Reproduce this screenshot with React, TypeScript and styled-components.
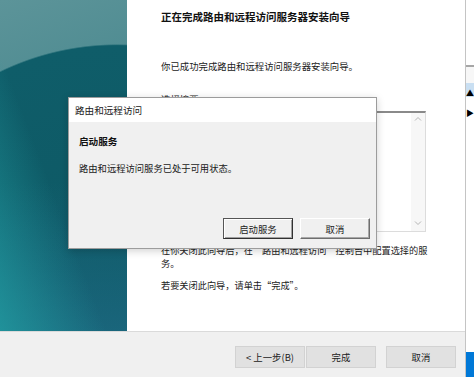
import React from "react";
import styled, { createGlobalStyle } from "styled-components";

const GlobalStyle = createGlobalStyle`
  html, body {
    margin: 0;
    padding: 0;
    background: #ffffff;
  }
  body {
    font-family: "Noto Sans CJK SC", "Noto Sans", sans-serif;
    color: #1a1a1a;
  }
`;

const Desktop = styled.div`
  position: relative;
  width: 474px;
  height: 377px;
  display: flex;
  overflow: hidden;
`;

const Wizard = styled.div`
  width: 466px;
  display: flex;
  flex-direction: column;
  border-right: 1px solid #c4c4c4;
  box-sizing: border-box;
`;

const Main = styled.div`
  height: 331px;
  display: flex;
`;

const Banner = styled.div`
  width: 127px;
  flex-shrink: 0;
  background:
    linear-gradient(to top right, rgba(34, 160, 164, 0.75) 0%, rgba(34, 160, 164, 0) 42%),
    linear-gradient(to bottom, rgba(36, 112, 142, 0) 55%, rgba(36, 112, 142, 0.55) 100%),
    radial-gradient(circle 268px at 117px 312px, #0d5864 0%, #0f5d69 99.4%, rgba(15, 93, 105, 0) 100%),
    linear-gradient(160deg, #5c9499 0%, #43848b 55%, #307780 100%);
`;

const Content = styled.div`
  flex: 1;
  background: #ffffff;
  padding: 10px 0 0 34px;
  display: flex;
  flex-direction: column;
`;

const Title = styled.div`
  font-size: 10.5px;
  line-height: 14px;
  font-weight: 700;
  color: #111;
`;

const Text = styled.div<{ $top?: number }>`
  font-size: 9.4px;
  line-height: 13px;
  margin-top: ${(p) => p.$top ?? 0}px;
  color: #1a1a1a;
  white-space: nowrap;
`;

const SummaryBox = styled.div`
  margin-top: 5px;
  width: 265px;
  height: 121px;
  box-sizing: border-box;
  border-top: 2px solid #8a8a8a;
  border-left: 1px solid #dcdcdc;
  border-right: 1px solid #dcdcdc;
  border-bottom: 1px solid #dcdcdc;
  display: flex;
  justify-content: flex-end;
`;

const ScrollBar = styled.div`
  width: 14px;
  background: #f7f7f7;
  display: flex;
  flex-direction: column;
  justify-content: space-between;
  align-items: center;
  padding: 2px 0 4px;
`;

const ScrollArrow = styled.svg`
  width: 8px;
  height: 8px;
`;

const Paragraph = styled.div<{ $top?: number }>`
  margin-top: ${(p) => p.$top ?? 0}px;
  width: 268px;
  font-size: 9.2px;
  line-height: 13px;
  color: #1a1a1a;
`;

const Divider = styled.div`
  height: 1px;
  background: #dadada;
`;

const Footer = styled.div`
  flex: 1;
  background: #f0f0f0;
  display: flex;
  align-items: flex-start;
  justify-content: flex-end;
  padding: 14px 9px 0 0;
  gap: 1px;
`;

const NavButton = styled.div<{ $gap?: number }>`
  width: 70px;
  height: 22px;
  box-sizing: border-box;
  margin-left: ${(p) => p.$gap ?? 0}px;
  background: #e1e1e1;
  border: 1px solid #d2d2d2;
  display: flex;
  align-items: center;
  justify-content: center;
  font-size: 9.4px;
  color: #222;
`;

const SideWindow = styled.div`
  flex: 1;
  display: flex;
  flex-direction: column;
  background: #f7f7f7;
`;

const SideBlock = styled.div<{ $h: number; $bg: string }>`
  height: ${(p) => p.$h}px;
  background: ${(p) => p.$bg};
  display: flex;
  align-items: flex-end;
  font-size: 8px;
  line-height: 8px;
  color: #000;
  overflow: hidden;
`;

const Dialog = styled.div`
  position: absolute;
  left: 68px;
  top: 97px;
  width: 309px;
  height: 152px;
  box-sizing: border-box;
  border: 1px solid #9c9c9c;
  box-shadow: 0 2px 8px rgba(0, 0, 0, 0.18);
  display: flex;
  flex-direction: column;
  background: #f0f0f0;
`;

const DialogTitle = styled.div`
  height: 24px;
  background: #ffffff;
  padding-left: 6px;
  display: flex;
  align-items: center;
  font-size: 9.6px;
  color: #222;
`;

const DialogBody = styled.div`
  flex: 1;
  display: flex;
  flex-direction: column;
  padding: 13px 6px 9px 10px;
`;

const DialogHeading = styled.div`
  font-size: 9.6px;
  line-height: 13px;
  font-weight: 700;
  color: #111;
`;

const DialogMessage = styled.div`
  margin-top: 14px;
  font-size: 9.3px;
  line-height: 13px;
  color: #1a1a1a;
`;

const DialogActions = styled.div`
  margin-top: auto;
  display: flex;
  justify-content: flex-end;
  gap: 7px;
`;

const ClassicButton = styled.div<{ $default?: boolean }>`
  width: 70px;
  height: 21px;
  box-sizing: border-box;
  background: #f0f0f0;
  border: 1px solid;
  border-color: ${(p) =>
    p.$default ? "#555 #303030 #303030 #555" : "#ffffff #6e6e6e #6e6e6e #ffffff"};
  box-shadow: ${(p) =>
    p.$default
      ? "inset 1px 1px 0 #ffffff, inset -1px -1px 0 #a0a0a0"
      : "inset -1px -1px 0 #a8a8a8, 0 0 0 0 transparent"};
  display: flex;
  align-items: center;
  justify-content: center;
  font-size: 9.4px;
  color: #222;
`;

const Chevron = ({ up }: { up?: boolean }) => (
  <ScrollArrow viewBox="0 0 8 8">
    <path
      d={up ? "M1 5.5 L4 2.5 L7 5.5" : "M1 2.5 L4 5.5 L7 2.5"}
      fill="none"
      stroke="#b5b5b5"
      strokeWidth="1"
    />
  </ScrollArrow>
);

export default function App() {
  return (
    <>
      <GlobalStyle />
      <Desktop>
        <Wizard>
          <Main>
            <Banner />
            <Content>
              <Title>正在完成路由和远程访问服务器安装向导</Title>
              <Text $top={36}>你已成功完成路由和远程访问服务器安装向导。</Text>
              <Text $top={20}>选择摘要:</Text>
              <SummaryBox>
                <ScrollBar>
                  <Chevron up />
                  <Chevron />
                </ScrollBar>
              </SummaryBox>
              <Paragraph $top={12}>
                在你关闭此向导后，在“路由和远程访问”控制台中配置选择的服务。
              </Paragraph>
              <Paragraph $top={9}>若要关闭此向导，请单击“完成”。</Paragraph>
            </Content>
          </Main>
          <Divider />
          <Footer>
            <NavButton>&lt; 上一步(B)</NavButton>
            <NavButton>完成</NavButton>
            <NavButton $gap={9}>取消</NavButton>
          </Footer>
        </Wizard>
        <SideWindow>
          <SideBlock $h={65} $bg="#ffffff" />
          <SideBlock $h={2} $bg="#a6a6a6" />
          <SideBlock $h={16} $bg="#f7f7f7" />
          <SideBlock $h={14} $bg="#c9dff2">▲</SideBlock>
          <SideBlock $h={20} $bg="#ffffff">▶</SideBlock>
          <SideBlock $h={235} $bg="#ffffff" />
          <SideBlock $h={25} $bg="#0078d7" />
        </SideWindow>
        <Dialog>
          <DialogTitle>路由和远程访问</DialogTitle>
          <DialogBody>
            <DialogHeading>启动服务</DialogHeading>
            <DialogMessage>路由和远程访问服务已处于可用状态。</DialogMessage>
            <DialogActions>
              <ClassicButton $default>启动服务</ClassicButton>
              <ClassicButton>取消</ClassicButton>
            </DialogActions>
          </DialogBody>
        </Dialog>
      </Desktop>
    </>
  );
}
